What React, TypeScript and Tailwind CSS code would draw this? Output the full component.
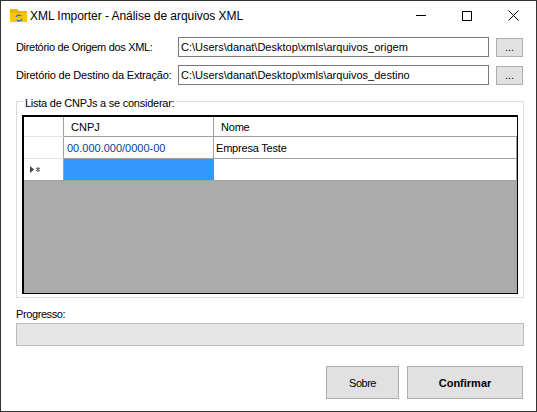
export default function App() {
  return (
    <div className="w-[537px] h-[412px] bg-white border border-[#333333] flex flex-col font-['Liberation_Sans',Arial,sans-serif] text-[11px] leading-[14px] text-black overflow-hidden">
      {/* title bar */}
      <div className="h-[29px] flex items-center shrink-0">
        <svg width="18" height="14" viewBox="0 0 18 14" className="ml-[9px] mt-[1px]">
          <path d="M0 0h7l2 2h8v3H0z" fill="#f0b400" />
          <path d="M0 13V4h17v9z" fill="#ffc20e" />
          <path d="M6 8a3 3 0 0 1 5-1M12 10a3 3 0 0 1-5 1" stroke="#2a6fd6" strokeWidth="1.3" fill="none" />
        </svg>
        <span className="ml-[2px] text-[12px] tracking-[-0.05px]">XML Importer - Análise de arquivos XML</span>
        <div className="ml-auto flex items-center">
          <div className="w-[46px] h-[29px] flex items-center justify-center">
            <div className="w-[10px] h-px bg-black" />
          </div>
          <div className="w-[46px] h-[29px] flex items-center justify-center">
            <div className="w-[10px] h-[10px] border border-black" />
          </div>
          <div className="w-[46px] h-[29px] flex items-center justify-center">
            <svg width="11" height="11" viewBox="0 0 11 11"><path d="M.5.5l10 10M10.5.5l-10 10" stroke="#000" strokeWidth="1" /></svg>
          </div>
        </div>
      </div>

      <div className="flex-1 flex flex-col pl-[15px] pr-[12px] pt-[7px]">
        {/* path rows */}
        <div className="flex flex-col gap-[8px]">
          <div className="flex items-center h-[20px]">
            <span className="w-[162px] whitespace-nowrap tracking-[-0.32px]">Diretório de Origem dos XML:</span>
            <div className="w-[311px] h-[20px] border border-[#7a7a7a] px-[2px] flex items-center">C:\Users\danat\Desktop\xmls\arquivos_origem</div>
            <button className="ml-[7px] w-[27px] h-[19px] bg-[#e1e1e1] border border-[#adadad] text-[11px] leading-[14px] flex items-center justify-center">...</button>
          </div>
          <div className="flex items-center h-[20px]">
            <span className="w-[162px] whitespace-nowrap tracking-[-0.2px]">Diretório de Destino da Extração:</span>
            <div className="w-[311px] h-[20px] border border-[#7a7a7a] px-[2px] flex items-center">C:\Users\danat\Desktop\xmls\arquivos_destino</div>
            <button className="ml-[7px] w-[27px] h-[19px] bg-[#e1e1e1] border border-[#adadad] text-[11px] leading-[14px] flex items-center justify-center">...</button>
          </div>
        </div>

        {/* group box */}
        <div className="relative mt-[16px] w-[508px] h-[197px] border border-[#dcdcdc] px-[5px] pt-[13px]">
          <span className="absolute left-[6px] top-[-6px] bg-white px-[2px] tracking-[-0.25px] whitespace-nowrap">Lista de CNPJs a se considerar:</span>
          <div className="w-[496px] h-[179px] border-t-2 border-l-2 border-r border-b border-black bg-[#ababab] flex flex-col">
            <div className="flex h-[20px] bg-white border-b border-[#a0a0a0]">
              <div className="w-[40px] border-r border-b border-r-[#a0a0a0] border-b-[#e4e4e4] -mb-px" />
              <div className="w-[150px] border-r border-[#a0a0a0] pl-[7px] flex items-center">CNPJ</div>
              <div className="flex-1 pl-[7px] flex items-center tracking-[-0.2px]">Nome</div>
            </div>
            <div className="flex h-[22px] bg-white border-b border-[#a0a0a0]">
              <div className="w-[40px] border-r border-b border-r-[#a0a0a0] border-b-[#e4e4e4] -mb-px" />
              <div className="w-[150px] border-r border-[#a0a0a0] pl-[3px] flex items-center text-[#0a3f8c]">00.000.000/0000-00</div>
              <div className="flex-1 pl-[2px] flex items-center border-r border-[#a0a0a0] tracking-[-0.2px]">Empresa Teste</div>
            </div>
            <div className="flex h-[22px] bg-white border-b border-[#a0a0a0]">
              <div className="w-[40px] border-r border-[#a0a0a0] flex items-center pl-[6px]">
                <svg width="12" height="8" viewBox="0 0 12 8">
                  <path d="M0 0v7l4-3.5z" fill="#444" />
                  <path d="M6 2l4 3M10 2l-4 3M8 1v5" stroke="#555" strokeWidth="1" />
                </svg>
              </div>
              <div className="w-[150px] bg-[#3399ff]" />
              <div className="flex-1 border-r border-[#a0a0a0]" />
            </div>
          </div>
        </div>

        {/* progress */}
        <div className="mt-[9px] h-[14px] leading-[14px] tracking-[-0.4px]">Progresso:</div>
        <div className="mt-[2px] w-[508px] h-[23px] bg-[#e6e6e6] border border-[#bcbcbc]" />

        {/* actions */}
        <div className="mt-[20px] flex pl-[310px] gap-[8px]">
          <button className="w-[73px] h-[33px] bg-[#e1e1e1] border border-[#adadad] text-[11px] tracking-[-0.5px]">Sobre</button>
          <button className="w-[116px] h-[33px] bg-[#e1e1e1] border border-[#adadad] text-[11px] font-bold">Confirmar</button>
        </div>
      </div>
    </div>
  );
}
